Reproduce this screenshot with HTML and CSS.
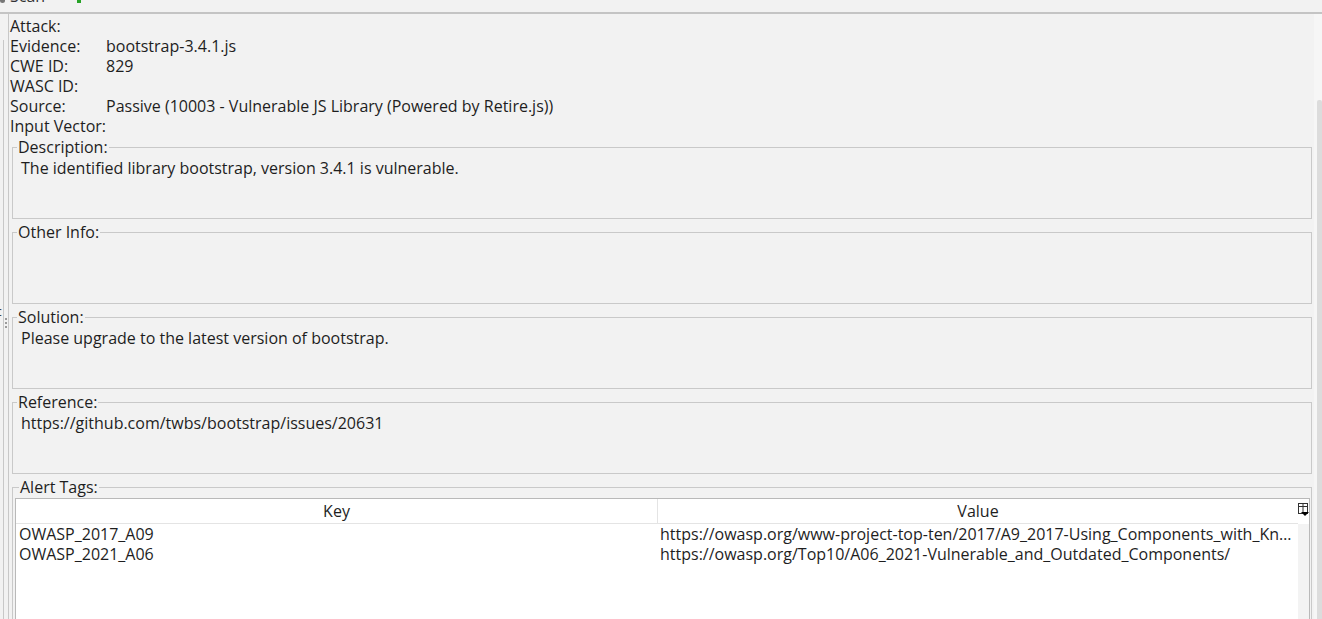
FILE: index.html
```html
<!DOCTYPE html>
<html lang="en">
<head>
<meta charset="utf-8">
<title>Alert details</title>
<link rel="stylesheet" href="styles.css">
</head>
<body>
<div class="toolbar">
  <div class="toolbar-inner">
    <span class="tb-icon"></span>
    <span class="tb-label">Scan</span>
    <span class="tb-green"></span>
  </div>
</div>
<div class="main">
  <div class="gutter">
    <div class="gutter-line"></div>
    <span class="gutter-c">c</span>
    <span class="gutter-dots"><i></i><i></i><i></i></span>
  </div>
  <div class="content">
    <div class="details">
      <div class="row"><span class="lbl">Attack:</span><span class="val"></span></div>
      <div class="row"><span class="lbl">Evidence:</span><span class="val">bootstrap-3.4.1.js</span></div>
      <div class="row"><span class="lbl">CWE ID:</span><span class="val">829</span></div>
      <div class="row"><span class="lbl">WASC ID:</span><span class="val"></span></div>
      <div class="row"><span class="lbl">Source:</span><span class="val">Passive (10003 - Vulnerable JS Library (Powered by Retire.js))</span></div>
      <div class="row"><span class="lbl">Input Vector:</span><span class="val"></span></div>
    </div>
    <fieldset class="box">
      <legend>Description:</legend>
      <div class="box-body">The identified library bootstrap, version 3.4.1 is vulnerable.</div>
    </fieldset>
    <fieldset class="box">
      <legend>Other Info:</legend>
      <div class="box-body"></div>
    </fieldset>
    <fieldset class="box">
      <legend>Solution:</legend>
      <div class="box-body">Please upgrade to the latest version of bootstrap.</div>
    </fieldset>
    <fieldset class="box">
      <legend>Reference:</legend>
      <div class="box-body">https://github.com/twbs/bootstrap/issues/20631</div>
    </fieldset>
    <fieldset class="box tags">
      <legend>Alert Tags:</legend>
      <div class="table">
        <div class="table-main">
          <div class="thead">
            <div class="th">Key</div>
            <div class="th">Value</div>
          </div>
          <div class="tbody">
            <div class="tr"><div class="td">OWASP_2017_A09</div><div class="td">https://owasp.org/www-project-top-ten/2017/A9_2017-Using_Components_with_Known_Vulnerabilities</div></div>
            <div class="tr"><div class="td">OWASP_2021_A06</div><div class="td">https://owasp.org/Top10/A06_2021-Vulnerable_and_Outdated_Components/</div></div>
          </div>
        </div>
        <div class="table-side">
          <div class="corner">
            <svg width="11" height="13" viewBox="0 0 11 13" aria-hidden="true">
              <rect x="0.5" y="0.5" width="9" height="10" fill="#fff" stroke="#333"/>
              <line x1="0.5" y1="3.5" x2="9.5" y2="3.5" stroke="#333"/>
              <line x1="5" y1="0.5" x2="5" y2="10" stroke="#333"/>
              <polygon points="3,9 11,9 7,13" fill="#000"/>
            </svg>
          </div>
          <div class="vscroll"></div>
        </div>
      </div>
    </fieldset>
  </div>
  <div class="scrollbar">
    <div class="thumb"></div>
  </div>
</div>
</body>
</html>
```
FILE: styles.css
```css
html, body {
  margin: 0;
  height: 100%;
  overflow: hidden;
}
body {
  background: #f2f2f2;
  font-family: "Open Sans", "DejaVu Sans", sans-serif;
  font-size: 16px;
  color: #1e1e1e;
  display: flex;
  flex-direction: column;
}
.toolbar {
  height: 12px;
  flex: none;
  overflow: hidden;
  border-bottom: 2px solid #c4c4c4;
}
.toolbar-inner {
  display: flex;
  align-items: flex-start;
  margin-top: -11px;
  line-height: 14px;
  color: #333;
}
.tb-icon {
  width: 5px;
  height: 14px;
  margin-left: 0;
  border-radius: 3px;
  background: #777;
}
.tb-label {
  margin-left: 5px;
}
.tb-green {
  width: 4px;
  height: 14px;
  margin-left: 32px;
  background: #27a327;
}
.main {
  flex: 1;
  display: flex;
  min-height: 0;
}
.gutter {
  width: 8px;
  flex: none;
  border-right: 1px solid #c8c8c8;
  position: relative;
  display: flex;
  flex-direction: column;
}
.gutter-line {
  margin-top: 26px;
  margin-left: 3px;
  width: 1px;
  flex: 1;
  background: #c8c8c8;
}
.gutter-c {
  position: absolute;
  left: -4px;
  top: 292px;
  font-size: 12px;
  line-height: 12px;
  color: #444;
}
.gutter-dots {
  position: absolute;
  left: 5px;
  top: 304px;
  display: flex;
  flex-direction: column;
  gap: 2px;
}
.gutter-dots i {
  display: block;
  width: 2px;
  height: 2px;
  background: #9a9a9a;
}
.content {
  flex: 1;
  min-width: 0;
  padding-top: 2px;
}
.details {
  padding-left: 1px;
}
.row {
  display: flex;
  height: 20px;
  line-height: 20px;
  white-space: nowrap;
}
.lbl {
  width: 96px;
  flex: none;
}
.box {
  margin: 3px 2px 0 3px;
  padding: 0;
  border: 1px solid #c9c9c9;
  min-width: 0;
}
.box + .box {
  margin-top: 5px;
}
.box legend {
  margin-left: 4px;
  padding: 0 1px;
  line-height: 16px;
}
.box-body {
  box-sizing: border-box;
  height: 63px;
  padding: 3px 8px 0;
  line-height: 20px;
  white-space: nowrap;
}
.tags {
  border-bottom: none;
  padding: 3px 1px 0 2px;
}
.table {
  display: flex;
  border: 1px solid #b9b9b9;
  border-bottom: none;
  height: 140px;
  background: #fff;
}
.table-main {
  flex: 1;
  min-width: 0;
}
.thead {
  display: grid;
  grid-template-columns: 1fr 1fr;
  height: 24px;
  border-bottom: 1px solid #e4e4e4;
}
.th {
  text-align: center;
  line-height: 24px;
}
.th + .th {
  border-left: 1px solid #e4e4e4;
}
.tr {
  display: grid;
  grid-template-columns: 1fr 1fr;
  height: 20px;
  line-height: 20px;
}
.td {
  padding: 0 3px;
  white-space: nowrap;
  overflow: hidden;
  text-overflow: ellipsis;
}
.table-side {
  width: 11px;
  flex: none;
  display: flex;
  flex-direction: column;
}
.corner {
  height: 25px;
  background: #fff;
  display: flex;
  justify-content: flex-start;
  padding-top: 4px;
  box-sizing: border-box;
}
.vscroll {
  flex: 1;
  background: #f3f3f3;
}
.scrollbar {
  width: 8px;
  flex: none;
  background: #f6f6f6;
  display: flex;
  flex-direction: column;
  align-items: flex-end;
  padding-top: 86px;
  box-sizing: border-box;
}
.thumb {
  width: 5px;
  flex: 1;
  background: #dcdcdc;
  border-radius: 2px 2px 0 0;
}
```
